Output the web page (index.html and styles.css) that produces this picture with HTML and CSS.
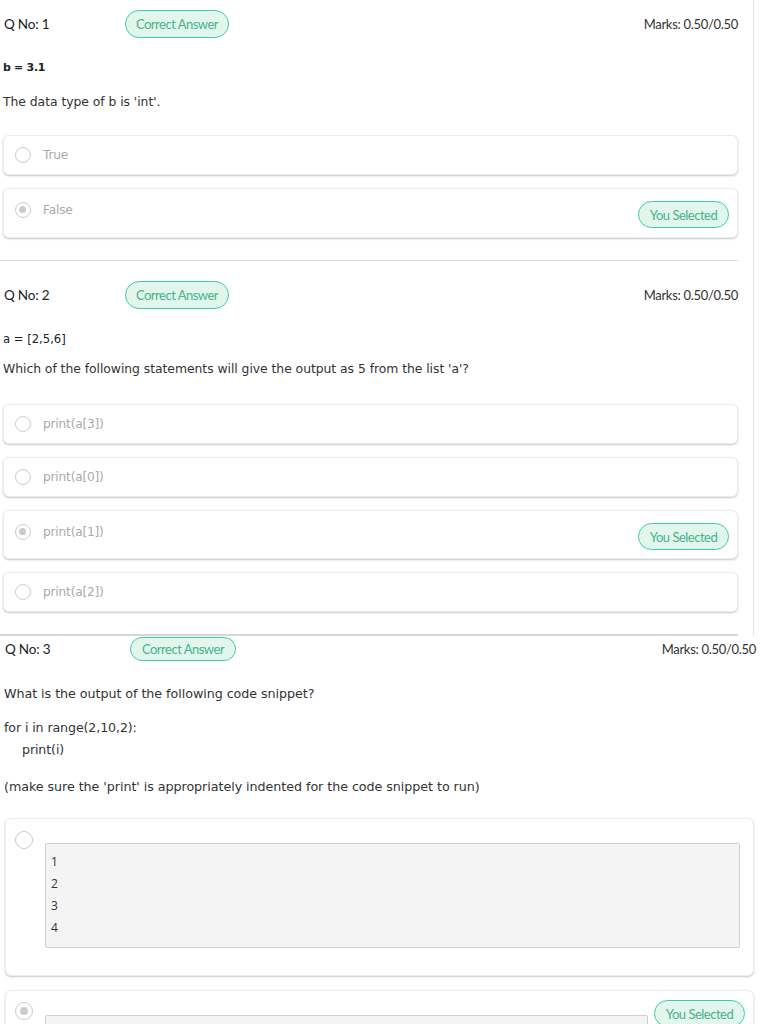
FILE: index.html
```html
<!DOCTYPE html>
<html lang="en">
<head>
  <meta charset="UTF-8">
  <meta name="viewport" content="width=device-width, initial-scale=1.0">
  <title>Quiz Review</title>
  <link rel="stylesheet" href="styles.css">
</head>
<body>
  <div class="panel">
    <div class="question q1">
      <div class="q-head">
        <span class="q-no">Q No: 1</span>
        <span class="badge">Correct Answer</span>
        <span class="marks">Marks: 0.50/0.50</span>
      </div>
      <p class="code-line strong">b = 3.1</p>
      <p class="q-text">The data type of b is 'int'.</p>
      <div class="options">
        <div class="option"><span class="radio"></span><span class="opt-text">True</span></div>
        <div class="option selected"><span class="radio"></span><span class="opt-text">False</span><span class="badge you">You Selected</span></div>
      </div>
    </div>

    <div class="question q2">
      <div class="q-head">
        <span class="q-no">Q No: 2</span>
        <span class="badge">Correct Answer</span>
        <span class="marks">Marks: 0.50/0.50</span>
      </div>
      <p class="code-line plain">a = [2,5,6]</p>
      <p class="q-text">Which of the following statements will give the output as 5 from the list 'a'?</p>
      <div class="options">
        <div class="option"><span class="radio"></span><span class="opt-text">print(a[3])</span></div>
        <div class="option"><span class="radio"></span><span class="opt-text">print(a[0])</span></div>
        <div class="option selected"><span class="radio"></span><span class="opt-text">print(a[1])</span><span class="badge you">You Selected</span></div>
        <div class="option"><span class="radio"></span><span class="opt-text">print(a[2])</span></div>
      </div>
    </div>
  </div>

  <div class="panel wide">
    <div class="question q3">
      <div class="q-head">
        <span class="q-no">Q No: 3</span>
        <span class="badge">Correct Answer</span>
        <span class="marks">Marks: 0.50/0.50</span>
      </div>
      <p class="q-text">What is the output of the following code snippet?</p>
      <div class="snippet">
        <p>for i in range(2,10,2):</p>
        <p class="indent">print(i)</p>
      </div>
      <p class="q-text note">(make sure the 'print' is appropriately indented for the code snippet to run)</p>
      <div class="options">
        <div class="option block">
          <span class="radio"></span>
          <div class="code-box">
            <p>1</p>
            <p>2</p>
            <p>3</p>
            <p>4</p>
          </div>
        </div>
        <div class="option block selected">
          <span class="radio"></span>
          <div class="code-box">
            <p>2</p>
            <p>4</p>
            <p>6</p>
            <p>8</p>
          </div>
          <span class="badge you">You Selected</span>
        </div>
      </div>
    </div>
  </div>
</body>
</html>
```

FILE: styles.css
```css
body {
  margin: 0;
  padding: 0;
  font-family: "Lato", "Open Sans", sans-serif;
  background-color: #fff;
  color: #333;
  overflow: hidden;
  height: 1024px;
}

p {
  margin: 0;
}

.panel {
  width: 754px;
  border-right: 1px solid #e4e4e4;
  box-sizing: border-box;
}

.panel.wide {
  width: 760px;
  border-right: none;
}

.question {
  width: 738px;
  padding-left: 3px;
  box-sizing: border-box;
}

.q1 {
  padding-top: 10px;
  padding-bottom: 22px;
  border-bottom: 1px solid #dcdcdc;
}

.q2 {
  padding-top: 20px;
  padding-bottom: 22px;
  border-bottom: 2px solid #d6d6d6;
}

.q3 {
  width: 756px;
  padding-left: 4px;
  padding-top: 1px;
}

.q-head {
  display: flex;
  align-items: center;
  height: 28px;
}

.q3 .q-head {
  height: 24px;
}

.q-no {
  width: 121px;
  font-size: 13.5px;
  color: #222;
  padding-left: 1px;
  letter-spacing: -0.2px;
}

.q3 .q-no {
  width: 125px;
}

.marks {
  margin-left: auto;
  font-size: 13px;
  color: #333;
  letter-spacing: -0.3px;
}

.badge {
  display: inline-flex;
  align-items: center;
  justify-content: center;
  width: 104px;
  height: 28px;
  box-sizing: border-box;
  border: 1.5px solid #3fcf9c;
  border-radius: 14px;
  background-color: #e2f6ee;
  color: #45b38c;
  font-size: 13px;
  letter-spacing: -0.5px;
}

.q3 .q-head .badge {
  width: 106px;
  height: 24px;
}

.code-line {
  margin-top: 22px;
  font-family: "DejaVu Sans", sans-serif;
  font-size: 11px;
  line-height: 16px;
  color: #222;
}

.code-line.strong {
  font-weight: bold;
  letter-spacing: -0.3px;
}

.code-line.plain {
  font-size: 11.6px;
}

.q-text {
  margin-top: 14px;
  font-family: "DejaVu Sans", sans-serif;
  font-size: 12.4px;
  line-height: 16px;
  color: #333;
  letter-spacing: -0.05px;
}

.q1 .q-text {
  margin-top: 18px;
}

.q3 .q-text {
  margin-top: 25px;
  font-size: 12.7px;
}

.snippet {
  margin-top: 15px;
  font-family: "DejaVu Sans", sans-serif;
  font-size: 12.6px;
  line-height: 22px;
  letter-spacing: -0.1px;
}

.snippet .indent {
  padding-left: 18px;
}

.q3 .note {
  margin-top: 18px;
}

.options {
  display: flex;
  flex-direction: column;
  gap: 13px;
  margin-top: 25px;
}

.q2 .options {
  margin-top: 27px;
}

.q3 .options {
  margin-top: 23px;
  gap: 14px;
  padding-left: 1px;
  padding-right: 2px;
}

.option {
  display: flex;
  align-items: center;
  height: 40px;
  padding: 0 8px 0 11px;
  box-sizing: border-box;
  border: 1px solid #ececec;
  border-radius: 6px;
  background-color: #fff;
  box-shadow: 0 1px 2px rgba(0, 0, 0, 0.22);
}

.option.selected {
  height: 50px;
  align-items: flex-start;
  padding-top: 13px;
}

.q2 .option.selected {
  height: 49px;
}

.radio {
  flex: none;
  width: 16px;
  height: 16px;
  border: 1.5px solid #cbcbcb;
  border-radius: 50%;
  box-sizing: border-box;
  position: relative;
}

.selected .radio::after {
  content: "";
  position: absolute;
  top: 3px;
  left: 3px;
  width: 7px;
  height: 7px;
  border-radius: 50%;
  background-color: #cbcbcb;
}

.opt-text {
  margin-left: 12px;
  font-family: "DejaVu Sans", sans-serif;
  font-size: 12.2px;
  color: #aaa;
  line-height: 16px;
  letter-spacing: -0.2px;
}

.option .you {
  margin-left: auto;
  margin-top: -1px;
  width: 91px;
  height: 27px;
  font-size: 13px;
}

.option.block {
  height: 158px;
  align-items: flex-start;
  padding: 12px 13px 0 9px;
}

.option.block .radio {
  width: 18px;
  height: 18px;
}

.option.block.selected .radio::after {
  top: 3.5px;
  left: 3.5px;
  width: 8px;
  height: 8px;
}

.code-box {
  flex: 1;
  margin-top: 12px;
  margin-left: 12px;
  height: 105px;
  padding: 7px 6px 7px 5px;
  box-sizing: border-box;
  border: 1px solid #cfcfcf;
  border-radius: 2px;
  background-color: #f4f4f4;
  font-family: "Open Sans", sans-serif;
  font-size: 12px;
  line-height: 22px;
  color: #333;
}

.option.block.selected {
  padding-top: 11px;
}

.option.block.selected .code-box {
  margin-top: 13px;
  margin-right: 6px;
}

.option.block .you {
  margin-top: -2px;
  margin-right: -5px;
}
```
